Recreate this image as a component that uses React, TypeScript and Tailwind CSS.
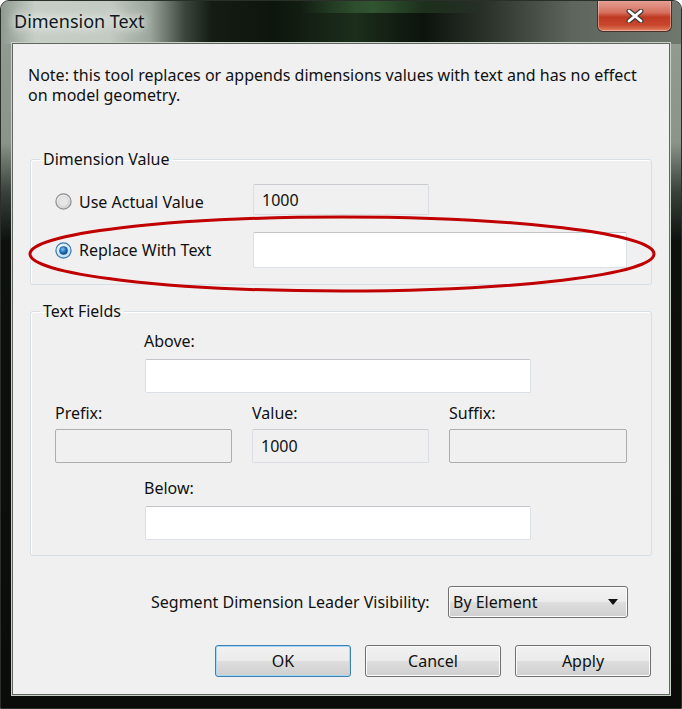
import React from "react";

const font = { fontFamily: '"Noto Sans", "Open Sans", sans-serif' };

function Radio({ checked }: { checked?: boolean }) {
  return (
    <svg width="17" height="17" viewBox="0 0 17 17" className="shrink-0">
      <defs>
        <radialGradient id="rOff" cx="40%" cy="35%" r="70%">
          <stop offset="0%" stopColor="#ffffff" />
          <stop offset="100%" stopColor="#cfcfcf" />
        </radialGradient>
        <radialGradient id="rOn" cx="40%" cy="35%" r="70%">
          <stop offset="0%" stopColor="#f2f9ff" />
          <stop offset="100%" stopColor="#b7dbf5" />
        </radialGradient>
        <radialGradient id="dot" cx="40%" cy="35%" r="70%">
          <stop offset="0%" stopColor="#7fc6f2" />
          <stop offset="60%" stopColor="#1b6fb7" />
          <stop offset="100%" stopColor="#0d3f75" />
        </radialGradient>
      </defs>
      {checked ? (
        <>
          <circle cx="8.5" cy="8.5" r="7.6" fill="url(#rOn)" stroke="#3a79a8" strokeWidth="1.2" />
          <circle cx="8.5" cy="8.5" r="4" fill="url(#dot)" stroke="#184f86" strokeWidth="0.6" />
        </>
      ) : (
        <>
          <circle cx="8.5" cy="8.5" r="7.6" fill="url(#rOff)" stroke="#8e8f8f" strokeWidth="1.2" />
          <circle cx="8.5" cy="8.5" r="5" fill="#e6e6e6" stroke="#c9c9c9" strokeWidth="0.6" />
        </>
      )}
    </svg>
  );
}

function CloseGlyph() {
  return (
    <svg width="18" height="14" viewBox="0 0 18 14">
      <path d="M3 2 L15 12 M15 2 L3 12" stroke="#3b3b3b" strokeWidth="5" strokeLinecap="round" />
      <path d="M3 2 L15 12 M15 2 L3 12" stroke="#ffffff" strokeWidth="2.8" strokeLinecap="round" />
    </svg>
  );
}

function WinButton({ label, isDefault }: { label: string; isDefault?: boolean }) {
  return (
    <button
      className={
        "w-[136px] h-[32px] rounded-[3px] text-[16px] text-[#111] bg-[linear-gradient(to_bottom,#f2f2f2_0%,#ebebeb_48%,#dddddd_52%,#cfcfcf_100%)] " +
        (isDefault
          ? "border border-[#3c7fb1] shadow-[inset_0_0_0_1px_#a6d9f7]"
          : "border border-[#707070] shadow-[inset_0_0_0_1px_#fcfcfc]")
      }
    >
      {label}
    </button>
  );
}

function Field({ value, kind }: { value?: string; kind: "white" | "disabled" | "dark" }) {
  const cls =
    kind === "white"
      ? "bg-white border border-[#dbdfe6] border-t-[#c2c5ca]"
      : kind === "disabled"
      ? "bg-[#f0f0f0] border border-[#dadde2] border-t-[#c8cbd0]"
      : "bg-[#f0f0f0] border border-[#adadad]";
  return (
    <div className={"h-full w-full rounded-[2px] flex items-center pl-[8px] text-[16px] text-[#111] " + cls}>
      {value}
    </div>
  );
}

function Group({ title, children, className }: { title: string; children: React.ReactNode; className?: string }) {
  return (
    <fieldset className={"ml-[17px] w-[622px] border border-[#d5dfe5] rounded-[3px] shadow-[inset_1px_1px_0_#ffffff] " + (className || "")}>
      <legend className="ml-[9px] px-[3px] text-[16px] leading-[20px] text-[#111]">{title}</legend>
      {children}
    </fieldset>
  );
}

export default function App() {
  return (
    <div className="w-[682px] h-[709px] bg-white" style={font}>
      <div className="relative w-[682px] h-[709px] rounded-t-[9px] overflow-hidden border border-[#2a2f2a] bg-[linear-gradient(to_bottom,#939d93_0%,#8a948a_20%,#39413a_27%,#0d110d_34%,#0a0c0a_100%)] pl-[11px] pr-[11px] pb-[13px] flex flex-col">
        {/* title bar */}
        <div className="absolute left-0 top-0 w-full h-[43px] bg-[linear-gradient(to_right,#8f998f_0%,#c6cec6_5%,#c2cac2_16%,#9aa49a_22%,#3c463c_27%,#141c14_31%,#0d150d_40%,#1c2e1c_52%,#0c130c_62%,#2c342c_72%,#5d655d_84%,#6f776f_100%)]" />
        <div className="absolute left-[300px] top-0 w-[180px] h-[12px] bg-[linear-gradient(to_right,rgba(80,140,80,0)_0%,rgba(80,140,80,0.45)_40%,rgba(80,140,80,0)_100%)]" />
        <div className="relative h-[42px] flex items-start shrink-0">
          <span className="mt-[8px] ml-[2px] text-[18px] leading-[24px] text-[#101820] [text-shadow:0_0_8px_#ffffff,0_0_14px_#ffffff]">
            Dimension Text
          </span>
          <div className="absolute right-[-2px] top-[-1px] w-[75px] h-[32px] rounded-b-[6px] border border-[#4a3028] border-t-0 bg-[linear-gradient(to_bottom,#e6a397_0%,#d6705e_40%,#c03a22_55%,#c8452a_80%,#e08060_100%)] flex items-center justify-center shadow-[inset_0_0_0_1px_rgba(255,255,255,0.35)]">
            <CloseGlyph />
          </div>
        </div>

        {/* client area */}
        <div className="relative flex-1 bg-[#f0f0f0] border border-[#5f665f] shadow-[0_0_0_1px_#c8d0c8] flex flex-col">
          <div className="mt-[21px] ml-[15px] text-[16px] leading-[20px] text-[#111]">
            <div className="whitespace-nowrap">Note: this tool replaces or appends dimensions values with text and has no effect</div>
            <div className="whitespace-nowrap">on model geometry.</div>
          </div>

          <Group title="Dimension Value" className="mt-[44px] pb-[16px]">
            <div className="mt-[15px] h-[31px] flex items-center">
              <div className="w-[198px] ml-[24px] pt-[4px] flex items-center gap-[7px] text-[16px] text-[#111]">
                <Radio />
                <span>Use Actual Value</span>
              </div>
              <div className="w-[176px] h-full">
                <Field value="1000" kind="disabled" />
              </div>
            </div>
            <div className="mt-[17px] h-[36px] flex items-center">
              <div className="w-[198px] ml-[24px] flex items-center gap-[7px] text-[16px] text-[#111]">
                <Radio checked />
                <span>Replace With Text</span>
              </div>
              <div className="w-[374px] h-full">
                <Field kind="white" />
              </div>
            </div>
          </Group>

          <Group title="Text Fields" className="mt-[16px] pb-[15px]">
            <div className="pl-[24px] text-[16px] leading-[20px] text-[#111]">
              <div className="mt-[10px] ml-[89px]">Above:</div>
              <div className="mt-[8px] ml-[90px] w-[386px] h-[34px]">
                <Field kind="white" />
              </div>
              <div className="mt-[10px] grid grid-cols-[177px_177px_178px] gap-x-[20px]">
                <div>Prefix:</div>
                <div>Value:</div>
                <div>Suffix:</div>
                <div className="mt-[6px] h-[34px]">
                  <Field kind="dark" />
                </div>
                <div className="mt-[6px] h-[34px]">
                  <Field value="1000" kind="disabled" />
                </div>
                <div className="mt-[6px] h-[34px]">
                  <Field kind="dark" />
                </div>
              </div>
              <div className="mt-[15px] ml-[89px]">Below:</div>
              <div className="mt-[8px] ml-[90px] w-[386px] h-[34px]">
                <Field kind="white" />
              </div>
            </div>
          </Group>

          <div className="mt-[30px] pl-[138px] h-[32px] flex items-center text-[16px] text-[#111]">
            <div className="w-[297px]">Segment Dimension Leader Visibility:</div>
            <div className="w-[180px] h-full rounded-[3px] border border-[#707070] shadow-[inset_0_0_0_1px_#fcfcfc] bg-[linear-gradient(to_bottom,#f2f2f2_0%,#ebebeb_48%,#dddddd_52%,#cfcfcf_100%)] flex items-center justify-between pl-[4px] pr-[9px]">
              <span>By Element</span>
              <svg width="10" height="6" viewBox="0 0 10 6">
                <path d="M0 0 L10 0 L5 6 Z" fill="#111" />
              </svg>
            </div>
          </div>

          <div className="mt-[27px] pl-[202px] flex gap-[14px]">
            <WinButton label="OK" isDefault />
            <WinButton label="Cancel" />
            <WinButton label="Apply" />
          </div>

          <svg className="absolute left-0 top-0 pointer-events-none" width="658" height="652" viewBox="0 0 658 652">
            <ellipse cx="329" cy="210" rx="312" ry="37" fill="none" stroke="#c00000" strokeWidth="3" />
          </svg>
        </div>
      </div>
    </div>
  );
}
